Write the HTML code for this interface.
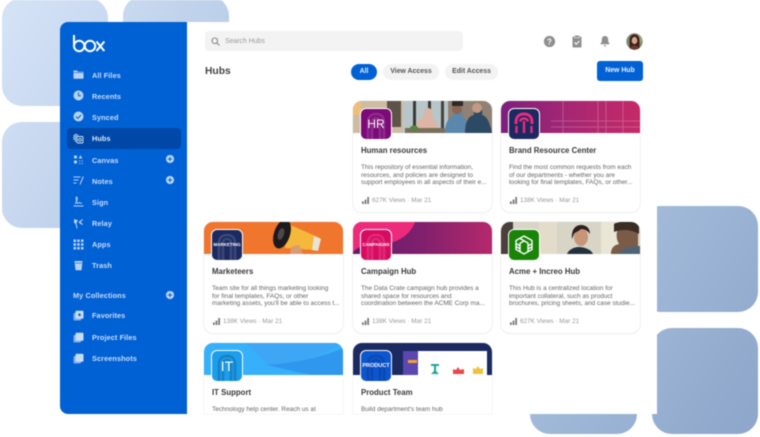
<!DOCTYPE html>
<html><head><meta charset="utf-8">
<style>
*{box-sizing:border-box;margin:0;padding:0}
html,body{width:760px;height:437px;overflow:hidden;background:#fff;font-family:"Liberation Sans",sans-serif}
#w{position:absolute;left:0;top:0;width:760px;height:437px;overflow:hidden;background:#fff;filter:blur(.4px)}
.abs,.nav,.card,.t{position:absolute}
#side{position:absolute;left:60px;top:22px;width:127px;height:392px;background:#0061d5;border-radius:8px 0 0 8px}
.nav{left:92px;font-size:7.3px;font-weight:bold;color:#c9dcf6;line-height:10px;white-space:nowrap;letter-spacing:.1px}
.ic{position:absolute;left:73px;width:11px;height:11px}
.card{width:139px;height:111px;background:#fff;border-radius:9px;box-shadow:0 0 0 .5px #e8e8e8,0 1px 2px rgba(0,0,0,.06);overflow:hidden}
.ban{position:absolute;left:0;top:0;width:139px;height:32px;overflow:hidden}
.logo{position:absolute;left:7px;top:7px;width:32px;height:32px;border-radius:6px;border:1px solid #fff;color:#fff;text-align:center;overflow:hidden}
.logo span{position:relative}
.arch{position:absolute;left:0;top:0;width:30px;height:30px;fill:none;stroke:#fff;stroke-opacity:.14;stroke-width:2.6}
.ti{position:absolute;left:8px;top:43px;font-size:8.700px;font-weight:bold;color:#3a3a3a;line-height:12px;white-space:nowrap;transform:scaleX(.9);transform-origin:0 0}
.de{position:absolute;left:8px;top:63px;width:128px;font-size:6.450px;color:#666;line-height:7.500px;white-space:nowrap}
.fo{position:absolute;left:19px;top:95px;font-size:6.400px;color:#989898;line-height:10px;white-space:nowrap}
.bars{position:absolute;left:9px;top:96px;width:7px;height:7px}
.pill{position:absolute;top:64px;height:16px;border-radius:8px;background:#f3f3f3;font-size:6.900px;font-weight:bold;color:#555;line-height:16px;text-align:center}
</style></head><body><div id="w">

<svg class="abs" style="left:0;top:0" width="760" height="437" viewBox="0 0 760 437">
<defs><linearGradient id="g" gradientUnits="userSpaceOnUse" x1="20" y1="0" x2="740" y2="437">
<stop offset="0" stop-color="#d4e2f6"/><stop offset=".25" stop-color="#b9cde8"/><stop offset=".7" stop-color="#a9c0df"/><stop offset="1" stop-color="#8ea7ca"/></linearGradient></defs>
<g fill="url(#g)">
<rect x="2" y="-2" width="106" height="108" rx="20"/>
<rect x="123" y="-4" width="106" height="60" rx="20"/>
<rect x="2" y="122" width="106" height="106" rx="20"/>
<rect x="640" y="206" width="118" height="106" rx="20"/>
<rect x="652" y="328" width="106" height="106" rx="20"/>
<rect x="530" y="370" width="107" height="64" rx="20"/>
</g>
<rect x="187" y="22" width="470" height="392" fill="#fff"/>
<rect x="600" y="396" width="52" height="18" fill="#fff"/>
</svg>

<div id="side"></div>
<svg class="abs" style="left:72px;top:34px" width="34" height="19" viewBox="0 0 34 19" fill="none" stroke="#fff" stroke-width="2">
<path d="M2 1v11"/><circle cx="7.200" cy="12" r="5.200"/><circle cx="18" cy="12" r="5.200"/><path d="M24.500 7.500l7.800 9.500M32.300 7.500L24.500 17"/></svg>

<div class="abs" style="left:67px;top:128px;width:114px;height:21px;background:#0048a8;border-radius:4px"></div>

<!-- nav icons -->
<svg class="ic" style="top:69px" viewBox="0 0 11 11" fill="#b9d2f3"><path d="M.5 1.500h3.600l1 1.200h5.400v7H.5z"/><path d="M.8 3.600h9.400" stroke="#0061d5" stroke-width=".6"/></svg>
<svg class="ic" style="top:90px" viewBox="0 0 11 11"><circle cx="5.500" cy="5.500" r="5" fill="#b9d2f3"/><path d="M5.500 2.500v3.300h2.400" stroke="#0061d5" fill="none" stroke-width="1"/></svg>
<svg class="ic" style="top:111px" viewBox="0 0 11 11"><circle cx="5.500" cy="5.500" r="5" fill="#b9d2f3"/><path d="M3 5.700l1.800 1.700 3.200-3.400" stroke="#0061d5" fill="none" stroke-width="1.100"/></svg>
<svg class="ic" style="top:133px" viewBox="0 0 11 11" fill="none" stroke="#d4e4f9" stroke-width=".9"><rect x="4" y="3.500" width="6" height="6.500" rx="1"/><circle cx="7" cy="6.800" r="1.400"/><path d="M2.600 9V3.500L5 1.500M1 7V2.600L3.400.8"/></svg>
<svg class="ic" style="top:154px" viewBox="0 0 11 11" fill="#b9d2f3"><rect x="1" y="1.500" width="3" height="3" rx=".5"/><path d="M7.500 1l1.800 3.500H5.700z"/><rect x="1" y="6.500" width="3" height="3" rx=".5"/><path d="M6 7h1.500M8.500 7H10M6 9.500h1.500M8.500 9.500H10" stroke="#b9d2f3" stroke-width=".8"/></svg>
<svg class="ic" style="top:175px" viewBox="0 0 11 11" fill="none" stroke="#b9d2f3" stroke-width="1"><path d="M.5 2h7M.5 5h5M.5 8h3M10.300 1.500L7 9.500"/></svg>
<svg class="ic" style="top:196px" viewBox="0 0 11 11" fill="none" stroke="#b9d2f3" stroke-width=".9"><path d="M2 8c2-2 3-7 1.600-7C2.400 1 3.500 8 5 7.500 6 7 5.600 6 6.500 6.500 7 7 8 7.500 9 7M.5 10h10"/></svg>
<svg class="ic" style="top:218px" viewBox="0 0 11 11" fill="#b9d2f3"><path d="M1 1l4 1.400-1.500 2.500 1 5.500h-1L2.500 5.500 1 5z"/><path d="M6 3.500L9.500 1l.5.8L7.500 4l2.500 2.200-.5.8L6 5z"/></svg>
<svg class="ic" style="top:239px" viewBox="0 0 11 11" fill="#b9d2f3"><path d="M.5.500h2.500v2.500H.5zM4.200.500h2.500v2.500H4.200zM8 .500h2.500v2.500H8zM.5 4.200h2.500v2.500H.5zM4.200 4.200h2.500v2.500H4.200zM8 4.200h2.500v2.500H8zM.5 8h2.500v2.500H.5zM4.200 8h2.500v2.500H4.200zM8 8h2.500v2.500H8z"/></svg>
<svg class="ic" style="top:260px" viewBox="0 0 11 11" fill="#b9d2f3"><path d="M1.500 1h8L8.500 10.300h-6z"/><path d="M2 3.200h7" stroke="#0061d5" stroke-width=".6"/></svg>
<svg class="ic" style="top:310px" viewBox="0 0 11 11"><rect x=".5" y="3" width="7.500" height="7.500" rx="1" fill="#7fadea"/><rect x="2.500" y=".8" width="8" height="8" rx="1" fill="#c9dcf6"/><circle cx="6.500" cy="4.800" r="1.300" fill="#0061d5"/></svg>
<svg class="ic" style="top:332px" viewBox="0 0 11 11"><rect x=".5" y="3" width="7.500" height="7.500" rx="1" fill="#7fadea"/><rect x="2.500" y=".8" width="8" height="8" rx="1" fill="#c9dcf6"/></svg>
<svg class="ic" style="top:353px" viewBox="0 0 11 11"><rect x=".5" y="3" width="7.500" height="7.500" rx="1" fill="#7fadea"/><rect x="2.500" y=".8" width="8" height="8" rx="1" fill="#c9dcf6"/></svg>

<div class="nav" style="top:71px">All Files</div>
<div class="nav" style="top:92px">Recents</div>
<div class="nav" style="top:113px">Synced</div>
<div class="nav" style="top:134px;color:#dbe8fa">Hubs</div>
<div class="nav" style="top:156px">Canvas</div>
<div class="nav" style="top:177px">Notes</div>
<div class="nav" style="top:198px">Sign</div>
<div class="nav" style="top:219px">Relay</div>
<div class="nav" style="top:240px">Apps</div>
<div class="nav" style="top:261px">Trash</div>
<div class="nav" style="top:291px;left:73px">My Collections</div>
<div class="nav" style="top:311px">Favorites</div>
<div class="nav" style="top:333px">Project Files</div>
<div class="nav" style="top:354px">Screenshots</div>

<svg class="abs" style="left:166px;top:155px" width="8" height="8" viewBox="0 0 8 8"><circle cx="4" cy="4" r="4" fill="#c3d8f5"/><path d="M4 1.800v4.400M1.800 4h4.400" stroke="#0061d5"/></svg>
<svg class="abs" style="left:166px;top:176px" width="8" height="8" viewBox="0 0 8 8"><circle cx="4" cy="4" r="4" fill="#c3d8f5"/><path d="M4 1.800v4.400M1.800 4h4.400" stroke="#0061d5"/></svg>
<svg class="abs" style="left:166px;top:291px" width="8" height="8" viewBox="0 0 8 8"><circle cx="4" cy="4" r="4" fill="#c3d8f5"/><path d="M4 1.800v4.400M1.800 4h4.400" stroke="#0061d5"/></svg>

<!-- top bar -->
<div class="abs" style="left:205px;top:31px;width:258px;height:20px;background:#f3f3f3;border-radius:4px"></div>
<svg class="abs" style="left:211px;top:37px" width="9" height="9" viewBox="0 0 9 9" fill="none" stroke="#8a8a8a" stroke-width="1.100"><circle cx="3.800" cy="3.800" r="2.800"/><path d="M5.800 5.800L8.500 8.500"/></svg>
<div class="t" style="left:225px;top:37px;font-size:6.900px;color:#9a9a9a;line-height:10px">Search Hubs</div>
<div class="t" style="left:205px;top:64.500px;font-size:10.300px;font-weight:bold;color:#444;line-height:14px">Hubs</div>
<div class="pill" style="left:351px;width:26px;background:#0061d5;color:#e4eefb">All</div>
<div class="pill" style="left:383px;width:56px">View Access</div>
<div class="pill" style="left:445px;width:53px">Edit Access</div>
<div class="abs" style="left:597px;top:61px;width:46px;height:20px;background:#0061d5;border-radius:3px;color:#e8f0fc;font-size:6.900px;font-weight:bold;line-height:20px;text-align:center">New Hub</div>

<svg class="abs" style="left:543px;top:35px" width="13" height="13" viewBox="0 0 13 13"><circle cx="6.500" cy="6.500" r="5.600" fill="#8f8f8f"/><text x="6.500" y="9.300" text-anchor="middle" font-size="8" font-weight="bold" fill="#fff" font-family="Liberation Sans">?</text></svg>
<svg class="abs" style="left:571px;top:35px" width="12" height="13" viewBox="0 0 12 13"><rect x="1.500" y="1.500" width="9" height="11" rx="1" fill="#8f8f8f"/><rect x="3.500" y=".3" width="5" height="2.400" fill="#8f8f8f" stroke="#fff" stroke-width=".5"/><path d="M3.500 7.500l1.800 1.700 3-3.200" stroke="#fff" fill="none" stroke-width="1.100"/></svg>
<svg class="abs" style="left:599px;top:35px" width="12" height="13" viewBox="0 0 12 13" fill="#8f8f8f"><path d="M6 1c2.400 0 3.200 1.800 3.200 4 0 2.200.8 3.300 1.800 4.300H1C2 8.300 2.800 7.200 2.800 5 2.800 2.800 3.600 1 6 1z"/><path d="M4.600 10.300h2.800L6 12z"/></svg>
<svg class="abs" style="left:626px;top:33px" width="17" height="17" viewBox="0 0 17 17"><defs><clipPath id="av"><circle cx="8.500" cy="8.500" r="8.200"/></clipPath></defs><g clip-path="url(#av)"><rect width="17" height="17" fill="#7f8c72"/><rect x="11" width="6" height="9" fill="#a59f80"/><path d="M3.500 17V7c0-4 2.500-5.500 5-5.500S13.500 3 13.500 7v10z" fill="#3c211a"/><ellipse cx="8.500" cy="7.500" rx="2.800" ry="3.600" fill="#d9a78d"/><path d="M3 17c.5-3 3-4.500 5.500-4.500S13.500 14 14 17z" fill="#6d3a2e"/></g></svg>

<!-- card 1 -->
<div class="card" style="left:353px;top:101px">
 <div class="ban"><svg width="139" height="32" viewBox="0 0 139 32">
  <rect width="139" height="32" fill="#8f8173"/>
  <rect x="0" width="50" height="32" fill="#cdbba2"/><rect x="50" width="45" height="32" fill="#b9c6c9"/>
  <rect x="60" width="3" height="32" fill="#3c3a35"/><rect x="75" width="3" height="32" fill="#3c3a35"/><rect x="88" width="3" height="32" fill="#45423c"/>
  <rect x="0" y="0" width="8" height="14" fill="#eebf7a"/><rect x="34" width="14" height="26" fill="#5f5248"/>
  <path d="M62 32c0-8 2-14 8-15 1-2 0-9 5-10 5 0 5 7 4 10 5 1 6 8 6 15z" fill="#dcb5a5"/>
  <path d="M92 32c0-8 2-15 8-16-1-5 1-9 5-9s5 5 4 9c5 1 7 8 7 16z" fill="#5c87ac"/><circle cx="104" cy="8" r="5" fill="#8e654f"/><rect x="99" y="0" width="11" height="5" fill="#2f2925"/>
  <path d="M112 32c0-10 3-17 9-18-1-5 1-9 4-9s5 4 4 9c5 1 8 8 10 18z" fill="#2c4a63"/><circle cx="124" cy="7" r="5" fill="#c49a84"/>
  <rect x="52" y="27" width="40" height="5" fill="#7a6e5c"/><ellipse cx="61" cy="27" rx="4" ry="2.500" fill="#4d8a3c"/>
 </svg></div>
 <div class="logo" style="background:#7c0a78;font-size:12px;line-height:30px"><svg class="arch" viewBox="0 0 30 30"><path d="M7 30V13C7 8 10 5 15 5s8 3 8 8v17M11 30V13c0-2.500 1.800-4 4-4s4 1.500 4 4v17"/></svg><span>HR</span></div>
 <div class="ti">Human resources</div>
 <div class="de">This repository of essential information,<br>resources, and policies are designed to<br>support employees in all aspects of their e...</div>
 <svg class="bars" viewBox="0 0 8 8" fill="#777"><rect x="0" y="5" width="2" height="3"/><rect x="3" y="3" width="2" height="5"/><rect x="6" y="0" width="2" height="8"/></svg>
 <div class="fo">627K Views · Mar 21</div>
</div>

<!-- card 2 -->
<div class="card" style="left:501px;top:101px">
 <div class="ban" style="background:linear-gradient(90deg,#7d1f7c,#a72773 50%,#c52a67)"><svg width="139" height="32" viewBox="0 0 139 32" fill="none" stroke="#fff" stroke-opacity=".22"><path d="M62 0v32M97 0v32M105 0v32M122 0v32M50 20h89M50 26h89"/></svg></div>
 <div class="logo" style="background:#1c2a62"><svg width="30" height="30" viewBox="0 0 30 30" fill="none" stroke="#ee2a7b" stroke-width="3"><path d="M7 15v-2C7 8 10 5 15 5s8 3 8 8v2"/><path d="M7.500 17v7M15 12v12M22.500 17v7M11 12.500c.5-2 2-3 4-3s3.500 1 4 3" stroke-width="2.400"/></svg></div>
 <div class="ti">Brand Resource Center</div>
 <div class="de">Find the most common requests from each<br>of our departments - whether you are<br>looking for final templates, FAQs, or other...</div>
 <svg class="bars" viewBox="0 0 8 8" fill="#777"><rect x="0" y="5" width="2" height="3"/><rect x="3" y="3" width="2" height="5"/><rect x="6" y="0" width="2" height="8"/></svg>
 <div class="fo">138K Views · Mar 21</div>
</div>

<!-- card 3 -->
<div class="card" style="left:204px;top:222px">
 <div class="ban" style="background:#f0762e"><svg width="139" height="32" viewBox="0 0 139 32">
  <path d="M84 2L116 16l-5 12-30-2z" fill="#f4b83a"/>
  <path d="M110 14l7 3-3 12-6-1z" fill="#e7e3d5"/>
  <ellipse cx="78" cy="12" rx="8" ry="15" transform="rotate(18 78 12)" fill="#1c1a1c"/>
  <ellipse cx="77" cy="12" rx="3" ry="6" transform="rotate(18 77 12)" fill="#50474a"/>
  <path d="M86 32l1-7 8-2 4 9z" fill="#d99a74"/>
 </svg></div>
 <div class="logo" style="background:#1c2a62;font-size:4.500px;line-height:30px;font-weight:bold"><svg class="arch" viewBox="0 0 30 30"><path d="M7 30V13C7 8 10 5 15 5s8 3 8 8v17M11 30V13c0-2.500 1.800-4 4-4s4 1.500 4 4v17"/></svg><span>MARKETING</span></div>
 <div class="ti">Marketeers</div>
 <div class="de">Team site for all things marketing looking<br>for final templates, FAQs, or other<br>marketing assets, you'll be able to access t...</div>
 <svg class="bars" viewBox="0 0 8 8" fill="#777"><rect x="0" y="5" width="2" height="3"/><rect x="3" y="3" width="2" height="5"/><rect x="6" y="0" width="2" height="8"/></svg>
 <div class="fo">138K Views · Mar 21</div>
</div>

<!-- card 4 -->
<div class="card" style="left:353px;top:222px">
 <div class="ban" style="background:linear-gradient(90deg,#5d1d70,#81206d 50%,#b5296c)"><svg width="139" height="32" viewBox="0 0 139 32"><path d="M0 0h62c-6 16-22 24-50 24-5 0-9 3-12 6z" fill="#ee2a7b"/></svg></div>
 <div class="logo" style="background:#d90a62;font-size:4.500px;line-height:30px;font-weight:bold"><svg class="arch" viewBox="0 0 30 30"><path d="M7 30V13C7 8 10 5 15 5s8 3 8 8v17M11 30V13c0-2.500 1.800-4 4-4s4 1.500 4 4v17"/></svg><span>CAMPAIGNS</span></div>
 <div class="ti">Campaign Hub</div>
 <div class="de">The Data Crate campaign hub provides a<br>shared space for resources and<br>coordination between the ACME Corp ma...</div>
 <svg class="bars" viewBox="0 0 8 8" fill="#777"><rect x="0" y="5" width="2" height="3"/><rect x="3" y="3" width="2" height="5"/><rect x="6" y="0" width="2" height="8"/></svg>
 <div class="fo">138K Views · Mar 21</div>
</div>

<!-- card 5 -->
<div class="card" style="left:501px;top:222px">
 <div class="ban"><svg width="139" height="32" viewBox="0 0 139 32">
  <rect width="139" height="32" fill="#d8d4c6"/><rect width="12" height="32" fill="#4a3f3a"/><rect x="38" width="18" height="32" fill="#e3dccb"/><rect x="100" width="18" height="32" fill="#e9e6d5"/>
  <path d="M66 32c2-5 8-7 12-7s12 2 14 7z" fill="#23303f"/>
  <ellipse cx="80" cy="15" rx="7" ry="9" fill="#c79679"/><path d="M71 17c-1-10 4-14 9-14s9 3 9 9c-2-3-5-5-9-5-3 3-6 3-7 5z" fill="#2a201c"/>
  <path d="M110 32c0-7 4-9 8-10-2-3-3-8-2-12 1-6 6-8 11-8s9 3 10 8v22z" fill="#7a5b46"/><path d="M113 2c4-3 20-3 25 0v10c-8-5-18-5-25-2z" fill="#3b2c24"/><path d="M118 32c2-6 10-8 21-8v8z" fill="#4e6476"/>
 </svg></div>
 <div class="logo" style="background:#1a8407"><svg width="30" height="30" viewBox="0 0 30 30" fill="none" stroke="#fff" stroke-width="1.400"><path d="M15 6l8 4.500v9L15 24l-8-4.500v-9zM11 8.500l8 4.500v9M15 11l-4 2.300v8M7 13.500l4 2.300M7 16.500l4 2.300M19 16l4-2.300M19 19l4-2.300"/></svg></div>
 <div class="ti">Acme + Increo Hub</div>
 <div class="de">This Hub is a centralized location for<br>important collateral, such as product<br>brochures, pricing sheets, and case studie...</div>
 <svg class="bars" viewBox="0 0 8 8" fill="#777"><rect x="0" y="5" width="2" height="3"/><rect x="3" y="3" width="2" height="5"/><rect x="6" y="0" width="2" height="8"/></svg>
 <div class="fo">627K Views · Mar 21</div>
</div>

<!-- card 6 -->
<div class="card" style="left:204px;top:343px;height:71px;border-radius:9px 9px 0 0;box-shadow:0 0 0 .5px #eee">
 <div class="ban" style="background:#36b0fb"><svg width="139" height="32" viewBox="0 0 139 32"><path d="M40 0c10 6 16 14 24 22 30-1 56-10 75-22z" fill="#3ea7f5"/><path d="M62 22c20 4 40 10 50 10h27V5c-22 10-50 15-77 17z" fill="#2f98ee"/></svg></div>
 <div class="logo" style="background:#1d9eea;font-size:14px;line-height:30px"><svg class="arch" viewBox="0 0 30 30" style="stroke:#0b3f7a;stroke-opacity:.3"><path d="M7 30V13C7 8 10 5 15 5s8 3 8 8v17M11 30V13c0-2.500 1.800-4 4-4s4 1.500 4 4v17"/></svg><span>IT</span></div>
 <div class="ti">IT Support</div>
 <div class="de">Technology help center. Reach us at</div>
</div>

<!-- card 7 -->
<div class="card" style="left:353px;top:343px;height:71px;border-radius:9px 9px 0 0;box-shadow:0 0 0 .5px #eee">
 <div class="ban" style="background:#1c2a62"><svg width="139" height="32" viewBox="0 0 139 32">
  <rect x="50" y="8" width="84" height="24" fill="#fff"/><rect x="50" y="8" width="15" height="24" fill="#5c46b0"/><rect x="55" y="17" width="9" height="3" fill="#f5a524"/>
  <path d="M78 21h8v2h-3v5l3 3h-8l3-3v-5h-3z" fill="#1fa49b"/><path d="M100 31v-5l3 1 2-3 2 3 4-1v5z" fill="#e8474a"/><path d="M120 31v-6l3 1 2-3 2 3 3-1v6z" fill="#efc23d"/>
 </svg></div>
 <div class="logo" style="background:#0b57d0;font-size:5.500px;line-height:30px;font-weight:bold"><svg class="arch" viewBox="0 0 30 30" style="stroke:#0b2f7a;stroke-opacity:.35"><path d="M7 30V13C7 8 10 5 15 5s8 3 8 8v17M11 30V13c0-2.500 1.800-4 4-4s4 1.500 4 4v17"/></svg><span>PRODUCT</span></div>
 <div class="ti">Product Team</div>
 <div class="de">Build department's team hub</div>
</div>

</div></body></html>
